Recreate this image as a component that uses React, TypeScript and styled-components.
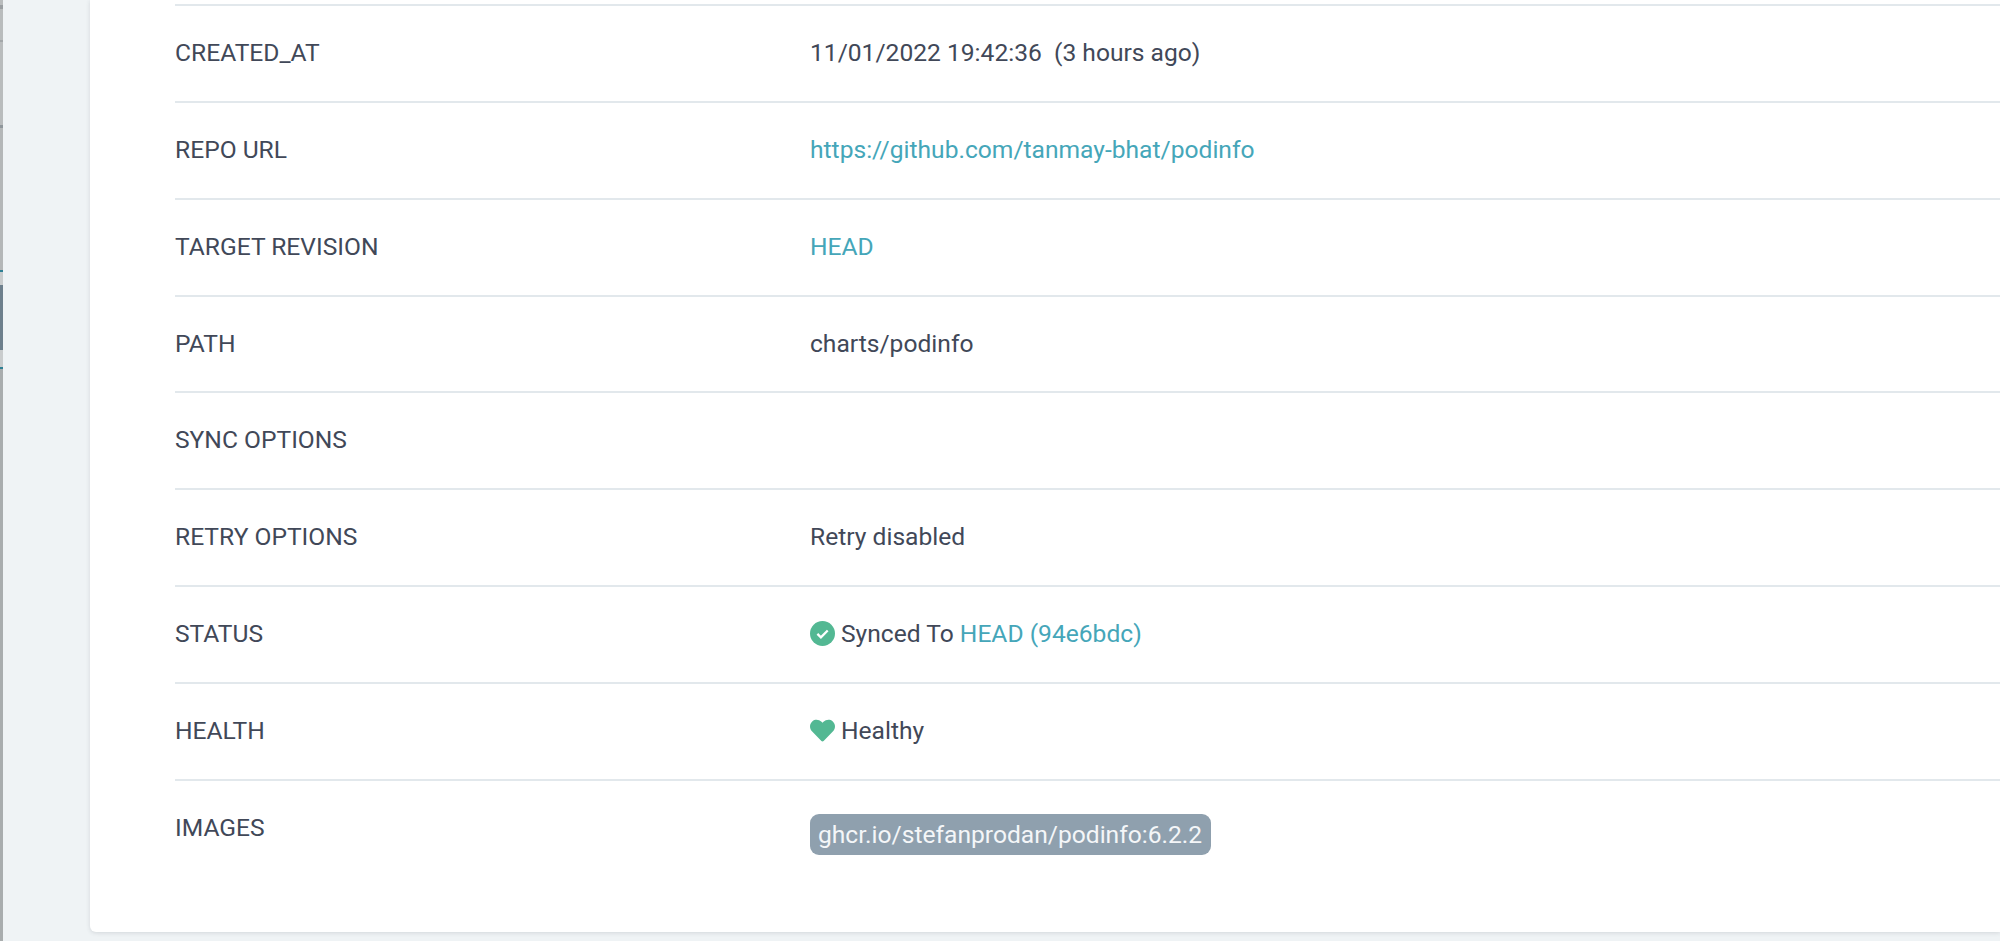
import * as React from 'react';
import styled, { createGlobalStyle } from 'styled-components';

type Row = {
  label: string;
  value?: React.ReactNode;
};

const GlobalStyle = createGlobalStyle`
  html, body {
    margin: 0;
    height: 100%;
    overflow: hidden;
    background: #eff3f5;
    font-family: Roboto, "Liberation Sans", sans-serif;
  }
`;

const Page = styled.div`
  display: flex;
  height: 941px;
`;

const Rail = styled.div`
  width: 3px;
  flex: none;
  background: linear-gradient(
    to bottom,
    #b9bcbd 0, #b9bcbd 5px,
    #9a9ea1 5px, #9a9ea1 9px,
    #b9bcbd 9px, #b9bcbd 40px,
    #a3a7a9 40px, #a3a7a9 42px,
    #b9bcbd 42px, #b9bcbd 125px,
    #8f969b 125px, #8f969b 128px,
    #b4b7b8 128px, #b4b7b8 270px,
    #2f7f93 270px, #2f7f93 272px,
    #c9cccd 272px, #c9cccd 285px,
    #6d7f8c 285px, #6d7f8c 350px,
    #c9cccd 350px, #c9cccd 367px,
    #2f7f93 367px, #2f7f93 369px,
    #a9adae 369px
  );
`;

const Main = styled.main`
  flex: 1;
  padding: 0 0 9px 87px;
  min-width: 0;
`;

const Card = styled.section`
  height: 100%;
  box-sizing: border-box;
  background: #fff;
  border-radius: 0 0 0 6px;
  box-shadow: 0 1px 4px rgba(60, 70, 80, 0.16);
  padding: 4px 0 0 85px;
`;

const InfoRow = styled.div`
  display: grid;
  grid-template-columns: 635px 1fr;
  height: 96.85px;
  box-sizing: border-box;
  padding-top: 31px;
  border-top: 2px solid #e2e8ec;
  font-size: 24.6px;
  line-height: 31px;
  color: #414858;
`;

const Label = styled.div`
  text-transform: uppercase;
`;

const Value = styled.div`
  display: flex;
  align-items: center;
  align-self: start;
  height: 31px;
  white-space: pre;
`;

const Link = styled.a`
  color: #45a6b9;
  text-decoration: none;
`;

const StatusIcon = styled.svg`
  width: 25px;
  height: 25px;
  margin-right: 6px;
  flex: none;
  fill: #53b893;
`;

const Tag = styled.span`
  display: inline-block;
  margin-top: 14px;
  padding: 0 9px 0 8px;
  height: 41px;
  line-height: 41px;
  border-radius: 9px;
  background: #8fa0ae;
  color: #f4f6f8;
`;

const CheckCircle = () => (
  <StatusIcon viewBox="0 0 25 25">
    <circle cx="12.5" cy="12.5" r="12.5" />
    <path d="M7.4 12.9l3.5 3.4 6.8-6.8" fill="none" stroke="#fff" strokeWidth="2.3" />
  </StatusIcon>
);

const Heart = () => (
  <StatusIcon viewBox="0 0 512 512">
    <path d="M462 64c-55-47-136-38-186 14l-20 20-20-20C186 26 105 17 50 64c-63 54-66 150-10 208l193 200c13 13 33 13 46 0l193-200c56-58 53-154-10-208z" />
  </StatusIcon>
);

const rows: Row[] = [
  { label: 'Created_at', value: '11/01/2022 19:42:36  (3 hours ago)' },
  { label: 'Repo URL', value: <Link href="#">https://github.com/tanmay-bhat/podinfo</Link> },
  { label: 'Target Revision', value: <Link href="#">HEAD</Link> },
  { label: 'Path', value: 'charts/podinfo' },
  { label: 'Sync Options' },
  { label: 'Retry Options', value: 'Retry disabled' },
  {
    label: 'Status',
    value: (
      <>
        <CheckCircle />
        Synced To <Link href="#">HEAD (94e6bdc)</Link>
      </>
    ),
  },
  {
    label: 'Health',
    value: (
      <>
        <Heart />
        Healthy
      </>
    ),
  },
  { label: 'Images', value: <Tag>ghcr.io/stefanprodan/podinfo:6.2.2</Tag> },
];

const App: React.FunctionComponent = () => (
  <Page>
    <GlobalStyle />
    <Rail />
    <Main>
      <Card>
        {rows.map(row => (
          <InfoRow key={row.label}>
            <Label>{row.label}</Label>
            <Value>{row.value}</Value>
          </InfoRow>
        ))}
      </Card>
    </Main>
  </Page>
);

export default App;
